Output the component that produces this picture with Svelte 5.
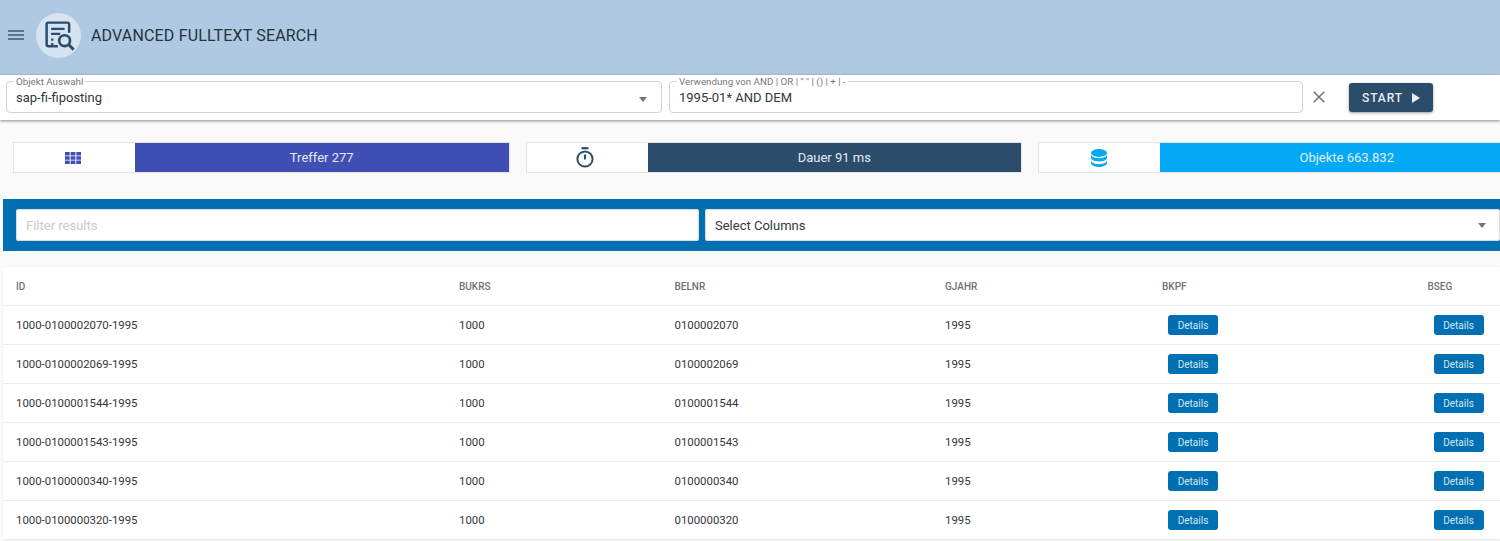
<script>
  const rows = [
    ['1000-0100002070-1995', '1000', '0100002070', '1995'],
    ['1000-0100002069-1995', '1000', '0100002069', '1995'],
    ['1000-0100001544-1995', '1000', '0100001544', '1995'],
    ['1000-0100001543-1995', '1000', '0100001543', '1995'],
    ['1000-0100000340-1995', '1000', '0100000340', '1995'],
    ['1000-0100000320-1995', '1000', '0100000320', '1995']
  ];
</script>

<div class="page">
  <header class="top">
    <svg class="menu" viewBox="0 0 16 12" width="16" height="12"><path d="M0 2h16M0 6h16M0 10h16" stroke="#44596c" stroke-width="1.600" fill="none"/></svg>
    <div class="logo">
      <svg viewBox="0 0 32 32" width="36" height="36" fill="none" stroke="#2b4c6b">
        <path d="M15 26H6.500A1.500 1.500 0 0 1 5 24.500V6.500A1.500 1.500 0 0 1 6.500 5h17A1.500 1.500 0 0 1 25 6.500V14" stroke-width="2.200"/>
        <path d="M9 10.500h12M9 15h8M9 20h2M9 24h2" stroke-width="2"/>
        <circle cx="21" cy="21" r="4.800" stroke-width="2.400"/>
        <path d="M24.500 24.500L29 29" stroke-width="2.600"/>
      </svg>
    </div>
    <h1>ADVANCED FULLTEXT SEARCH</h1>
  </header>

  <div class="toolbar">
    <fieldset class="field obj">
      <legend>Objekt Auswahl</legend>
      <span class="val">sap-fi-fiposting</span>
      <i class="caret"></i>
    </fieldset>
    <fieldset class="field query">
      <legend>Verwendung von AND | OR | " " | () | + | -</legend>
      <span class="val">1995-01* AND DEM</span>
    </fieldset>
    <svg class="clear" viewBox="0 0 12 12" width="12" height="12"><path d="M.7.7l10.600 10.600M11.300.7L.7 11.300" stroke="#6d7175" stroke-width="1.500" fill="none"/></svg>
    <button class="start">START <svg viewBox="0 0 8 10" width="8" height="10"><path d="M0 0l8 5-8 5z" fill="#e8edf2"/></svg></button>
  </div>

  <section class="stats">
    <div class="stat">
      <div class="ico">
        <svg viewBox="0 0 16 12" width="16" height="12"><path fill="#3f4fb3" d="M0 0h4.700v3.500H0zM5.600 0h4.800v3.500H5.600zM11.300 0H16v3.500h-4.700zM0 4.300h4.700v3.400H0zM5.600 4.300h4.800v3.400H5.600zM11.300 4.300H16v3.400h-4.700zM0 8.500h4.700V12H0zM5.600 8.500h4.800V12H5.600zM11.300 8.500H16V12h-4.700z"/></svg>
      </div>
      <div class="lab indigo">Treffer 277</div>
    </div>
    <div class="stat">
      <div class="ico">
        <svg viewBox="0 0 18 21" width="18" height="21" fill="none" stroke="#2b4c6b"><path d="M5.500 1.200h7" stroke-width="2.200"/><circle cx="9" cy="12" r="7.600" stroke-width="2"/><path d="M9 7.500v5" stroke-width="2"/></svg>
      </div>
      <div class="lab navy">Dauer 91 ms</div>
    </div>
    <div class="stat">
      <div class="ico">
        <svg class="db" viewBox="0 0 16 16" width="16" height="18" preserveAspectRatio="none" fill="#03a9f4"><ellipse cx="8" cy="3.500" rx="8" ry="3.500"/><path d="M0 5.200C1 7.400 4.500 8.200 8 8.200s7-.8 8-3v3C15 10.300 11.500 11 8 11S1 10.300 0 8.200zM0 10.500c1 2.200 4.500 3 8 3s7-.8 8-3v2.200c-1 2.300-4.500 3.300-8 3.300s-7-1-8-3.300z"/></svg>
      </div>
      <div class="lab sky">Objekte 663.832</div>
    </div>
  </section>

  <section class="filter">
    <div class="finput">Filter results</div>
    <div class="fselect">Select Columns<i class="caret"></i></div>
  </section>

  <section class="table">
    <div class="row head">
      <div>ID</div><div>BUKRS</div><div>BELNR</div><div>GJAHR</div><div>BKPF</div><div>BSEG</div>
    </div>
    {#each rows as r}
      <div class="row">
        <div>{r[0]}</div><div>{r[1]}</div><div>{r[2]}</div><div>{r[3]}</div>
        <div><button class="det">Details</button></div>
        <div><button class="det">Details</button></div>
      </div>
    {/each}
  </section>
</div>

<style>
  :global(body) { margin: 0; background: #fafafa; overflow: hidden; }
  .page { width: 1500px; height: 541px; overflow: hidden; font-family: Roboto, sans-serif; color: #2f3338; background: #fafafa; }
  .top { height: 75px; background: #afc9e2; display: flex; align-items: center; padding: 0 0 5px 8px; box-sizing: border-box; }
  .menu { margin-right: 12px; }
  .logo { width: 45px; height: 45px; border-radius: 50%; background: #d6e4f1; display: flex; align-items: center; justify-content: center; margin-right: 10px; }
  h1 { margin: 0; font-size: 16px; font-weight: 400; letter-spacing: .16px; color: #26323d; }
  .toolbar { height: 45px; background: #fff; box-shadow: 0 1px 3px rgba(0,0,0,.45); display: flex; align-items: flex-start; position: relative; }
  .field { margin: 1px 0 0; box-sizing: border-box; height: 37px; border: 1px solid #d4d4d4; border-radius: 4px; padding: 3px 9px 0; position: relative; min-width: 0; }
  .field legend { font-size: 9.750px; color: #777; padding: 0 2px; margin-left: -2px; line-height: 11px; }
  .val { font-size: 13px; line-height: 16px; color: #33373b; display: block; }
  .obj { width: 656px; margin-left: 6px; }
  .query { width: 634px; margin-left: 7px; }
  .caret { position: absolute; width: 0; height: 0; border: 4.500px solid transparent; border-top: 5px solid #757575; border-bottom: 0; }
  .obj .caret { right: 14px; top: 10px; }
  .clear { margin: 16px 0 0 10px; }
  .start { margin: 8px 0 0 24px; width: 84px; height: 29px; border: 0; border-radius: 3px; background: #2b4c6b; color: #e8edf2; font: 500 12px Roboto, sans-serif; letter-spacing: .9px; display: flex; align-items: center; justify-content: center; gap: 9px; box-shadow: 0 1px 3px rgba(0,0,0,.4); }
  .stats { display: flex; gap: 16px; padding: 22px 0 0 13px; width: 1540px; box-sizing: border-box; }
  .stat { display: flex; width: 496.500px; flex: none; height: 31px; border: 1px solid #e4e4e4; box-sizing: border-box; }
  .ico { width: 121px; flex: none; background: #fff; display: flex; align-items: center; justify-content: center; padding-right: 4px; box-sizing: border-box; }
  .db { margin-left: 2px; }
  .lab { flex: 1; display: flex; align-items: center; justify-content: center; font-size: 13px; color: #e4ebf5; }
  .indigo { background: #3f4fb3; }
  .navy { background: #2b4c6b; }
  .sky { background: #03a9f4; }
  .filter { margin: 26px 0 0 3px; height: 52px; width: 1540px; background: #0070b3; display: flex; align-items: center; padding-left: 13px; gap: 6px; box-sizing: border-box; }
  .finput, .fselect { height: 32px; box-sizing: border-box; background: #fff; border-radius: 3px; display: flex; align-items: center; padding-left: 10px; font-size: 13px; box-shadow: inset 0 0 0 1px #dcdcdc; }
  .finput { width: 683px; color: #c8cbce; }
  .fselect { width: 795px; position: relative; color: #33373b; }
  .fselect .caret { right: 14px; top: 14px; }
  .table { margin: 16px 0 0 3px; width: 1497px; background: #fff; box-shadow: 0 0 2px rgba(0,0,0,.06); }
  .row { display: grid; grid-template-columns: 443px 215.500px 270.500px 217px 265.500px 1fr; height: 39px; align-items: center; padding-left: 13px; border-bottom: 1px solid #ececec; box-sizing: border-box; font-size: 11.400px; color: #33373b; }
  .head { font-size: 10px; font-weight: 500; color: #6f7276; }
  .det { margin-left: 6px; width: 50px; height: 20px; padding: 0; border: 0; border-radius: 3px; background: #0070b3; color: #d5e6f2; font: 400 10px Roboto, sans-serif; display: block; }
</style>
